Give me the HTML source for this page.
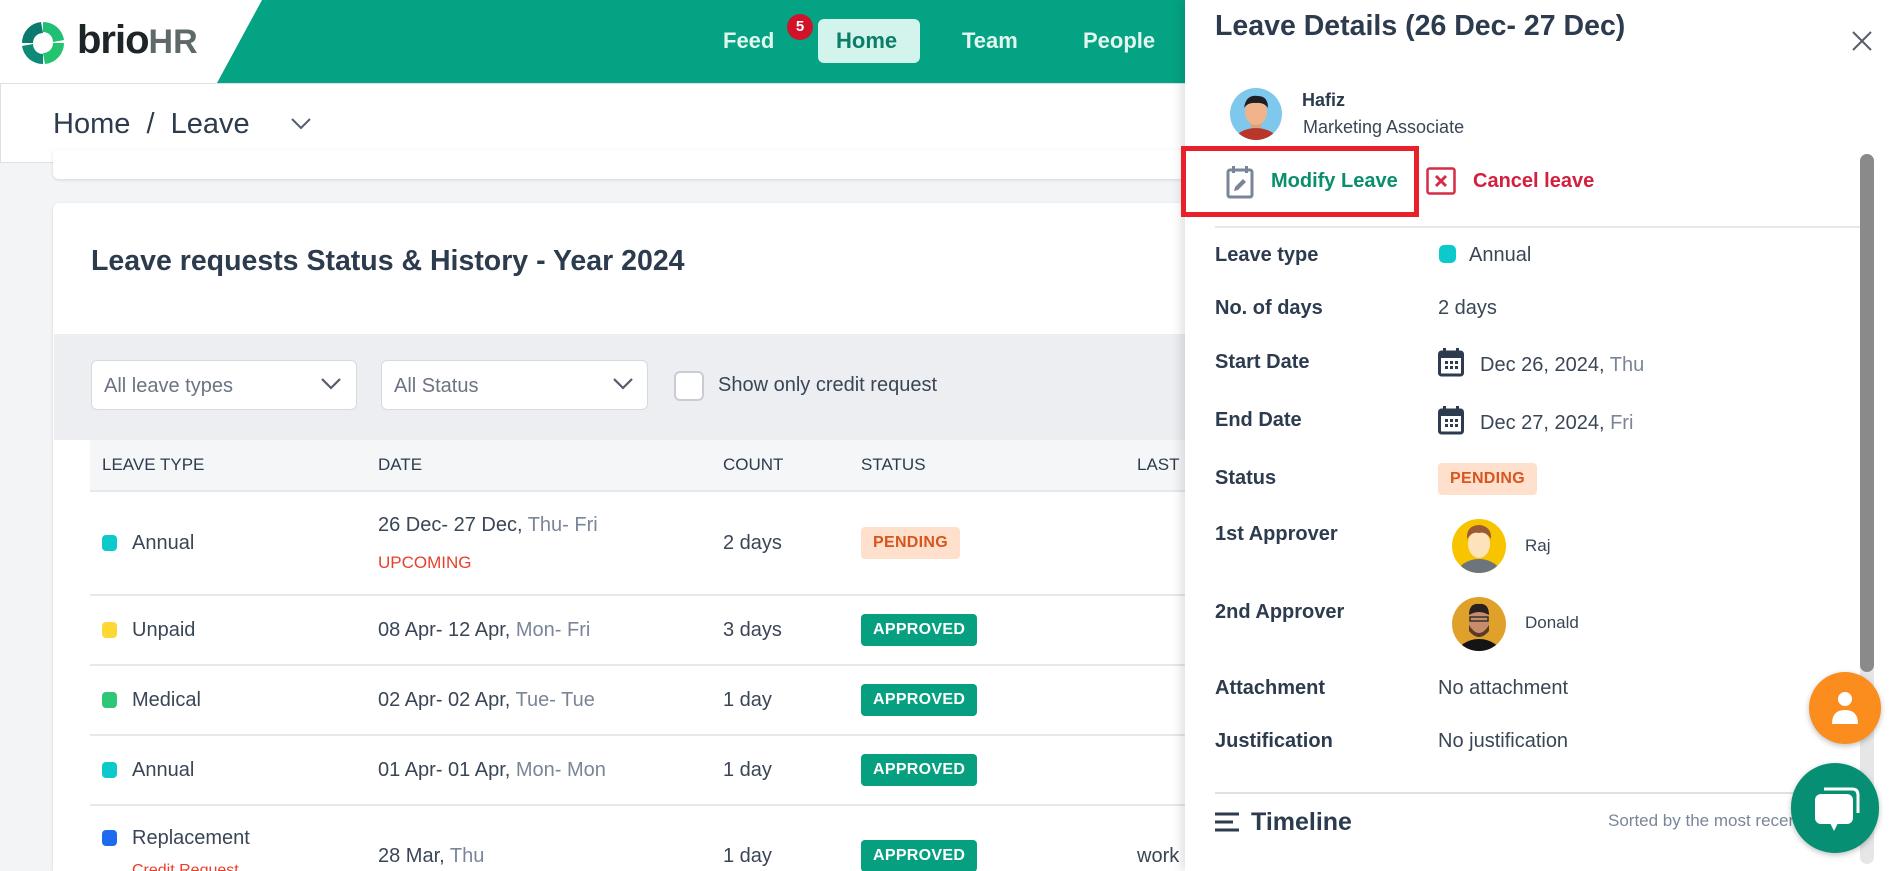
<!DOCTYPE html>
<html style="width:1896px;height:871px;overflow:hidden"><head><meta charset="utf-8"><style>
*{box-sizing:border-box;margin:0;padding:0}
body{width:1896px;height:871px;overflow:hidden;background:#F3F4F6;font-family:"Liberation Sans",sans-serif;color:#2D3B4E;position:relative}
.abs{position:absolute}
.hdr{left:0;top:0;width:1896px;height:83px;background:#04A383}
.logoarea{left:0;top:0;width:262px;height:83px;background:#fff;clip-path:polygon(0 0,262px 0,217px 83px,0 83px)}
.nav{top:28px;font-size:22px;color:#E2F5EF;font-weight:bold}
.crumb{left:0;top:83px;width:1200px;height:80px;background:#fff;border:1px solid #DDE0E4}
.card{background:#fff;border-radius:6px;box-shadow:0 1px 3px rgba(0,0,0,.12)}
.sel{background:#fff;border:1px solid #D6D9DE;border-radius:6px;height:50px;font-size:20px;color:#6B7482;padding:14px 12px}
.th{top:455px;font-size:17px;color:#2D3B4E}
.td{font-size:20px;color:#3A4656}
.muted{color:#7A8698}
.dot{width:15px;height:16px;border-radius:4px}
.bad{font-size:16px;font-weight:bold;padding:7px 12px;border-radius:4px;letter-spacing:.3px}
.ap{background:#06A081;color:#fff}
.pe{background:#FFE0CC;color:#D5561E}
.rowline{height:2px;background:#E6E8EB;left:90px;width:1100px}
.panel{left:1185px;top:0;width:711px;height:871px;background:#fff;box-shadow:-4px 0 10px rgba(0,0,0,.12)}
.lbl{left:1215px;font-size:20px;font-weight:bold;color:#2D3B4E}
.val{left:1438px;font-size:20px;color:#3A4656}
</style></head><body>
<div class="abs hdr"></div>
<div class="abs logoarea"></div>
<svg class="abs" style="left:18px;top:18px" width="50" height="50" viewBox="0 0 50 50">
<path d="M25 4 A21 21 0 0 1 46 22 L35 24 A10 10 0 0 0 25 14Z" fill="#1FBF74"/>
<path d="M46 25 A21 21 0 0 1 27 46 L25 35 A10 10 0 0 0 35 25Z" fill="#22C56E"/>
<path d="M25 46 A21 21 0 0 1 4 28 L15 26 A10 10 0 0 0 25 36Z" fill="#0E8A78"/>
<path d="M4 25 A21 21 0 0 1 23 4 L25 15 A10 10 0 0 0 15 25Z" fill="#0A7A6E"/>
</svg>
<div class="abs" style="left:77px;top:18px;font-size:40px;font-weight:bold;color:#1E2528;letter-spacing:-1px">brio<span style="color:#5E6A6A;font-size:34px;letter-spacing:0">HR</span></div>
<div class="abs nav" style="left:723px">Feed</div>
<div class="abs" style="left:787px;top:14px;width:26px;height:26px;border-radius:13px;background:#D0132B;color:#fff;font-size:15px;font-weight:bold;text-align:center;line-height:26px">5</div>
<div class="abs" style="left:818px;top:19px;width:102px;height:44px;border-radius:6px;background:#D3F4EC"></div>
<div class="abs nav" style="left:836px;color:#0A7E68">Home</div>
<div class="abs nav" style="left:962px">Team</div>
<div class="abs nav" style="left:1083px">People</div>

<div class="abs crumb"></div>
<div class="abs" style="left:53px;top:108px;font-size:29px;color:#2D3B4E">Home&nbsp; /&nbsp; Leave</div>
<svg class="abs" style="left:290px;top:117px" width="22" height="14"><path d="M2 2 L11 11 L20 2" stroke="#555E6C" stroke-width="2" fill="none"/></svg>
<div class="abs card" style="left:53px;top:150px;width:1150px;height:29px;border-radius:0 0 6px 6px"></div>

<div class="abs card" style="left:53px;top:203px;width:1150px;height:668px;border-radius:6px 6px 0 0"></div>
<div class="abs" style="left:91px;top:245px;font-size:28.5px;font-weight:bold;color:#2D3B4E">Leave requests Status &amp; History - Year 2024</div>
<div class="abs" style="left:54px;top:334px;width:1140px;height:106px;background:#ECEEF1"></div>
<div class="abs sel" style="left:91px;top:360px;width:266px">All leave types</div>
<svg class="abs" style="left:320px;top:377px" width="22" height="14"><path d="M2 2 L11 11 L20 2" stroke="#555E6C" stroke-width="2.2" fill="none"/></svg>
<div class="abs sel" style="left:381px;top:360px;width:267px">All Status</div>
<svg class="abs" style="left:612px;top:377px" width="22" height="14"><path d="M2 2 L11 11 L20 2" stroke="#555E6C" stroke-width="2.2" fill="none"/></svg>
<div class="abs" style="left:674px;top:371px;width:30px;height:30px;border:2px solid #C9CDD3;border-radius:6px;background:#fff"></div>
<div class="abs" style="left:718px;top:374px;font-size:20px;color:#3A4656">Show only credit request</div>

<div class="abs" style="left:90px;top:440px;width:1104px;height:52px;background:#F5F6F8;border-bottom:2px solid #E6E8EB"></div>
<div class="abs th" style="left:102px">LEAVE TYPE</div>
<div class="abs th" style="left:378px">DATE</div>
<div class="abs th" style="left:723px">COUNT</div>
<div class="abs th" style="left:861px">STATUS</div>
<div class="abs th" style="left:1137px">LAST</div>

<div class="abs dot" style="left:102px;top:535px;background:#0CCACB"></div>
<div class="abs td" style="left:132px;top:532px">Annual</div>
<div class="abs td" style="left:378px;top:514px">26 Dec- 27 Dec, <span class="muted">Thu- Fri</span></div>
<div class="abs" style="left:378px;top:553px;font-size:17px;color:#E8402A">UPCOMING</div>
<div class="abs td" style="left:723px;top:532px">2 days</div>
<div class="abs bad pe" style="left:861px;top:527px">PENDING</div>
<div class="abs rowline" style="top:594px"></div>

<div class="abs dot" style="left:102px;top:622px;background:#FDD835"></div>
<div class="abs td" style="left:132px;top:619px">Unpaid</div>
<div class="abs td" style="left:378px;top:619px">08 Apr- 12 Apr, <span class="muted">Mon- Fri</span></div>
<div class="abs td" style="left:723px;top:619px">3 days</div>
<div class="abs bad ap" style="left:861px;top:614px">APPROVED</div>
<div class="abs rowline" style="top:664px"></div>

<div class="abs dot" style="left:102px;top:692px;background:#2EC777"></div>
<div class="abs td" style="left:132px;top:689px">Medical</div>
<div class="abs td" style="left:378px;top:689px">02 Apr- 02 Apr, <span class="muted">Tue- Tue</span></div>
<div class="abs td" style="left:723px;top:689px">1 day</div>
<div class="abs bad ap" style="left:861px;top:684px">APPROVED</div>
<div class="abs rowline" style="top:734px"></div>

<div class="abs dot" style="left:102px;top:762px;background:#0CCACB"></div>
<div class="abs td" style="left:132px;top:759px">Annual</div>
<div class="abs td" style="left:378px;top:759px">01 Apr- 01 Apr, <span class="muted">Mon- Mon</span></div>
<div class="abs td" style="left:723px;top:759px">1 day</div>
<div class="abs bad ap" style="left:861px;top:754px">APPROVED</div>
<div class="abs rowline" style="top:804px"></div>

<div class="abs dot" style="left:102px;top:830px;background:#1E6BF0"></div>
<div class="abs td" style="left:132px;top:827px">Replacement</div>
<div class="abs" style="left:132px;top:862px;font-size:16px;color:#E8402A">Credit Request</div>
<div class="abs td" style="left:378px;top:845px">28 Mar, <span class="muted">Thu</span></div>
<div class="abs td" style="left:723px;top:845px">1 day</div>
<div class="abs bad ap" style="left:861px;top:840px">APPROVED</div>
<div class="abs td" style="left:1137px;top:845px">work</div>

<div class="abs panel"></div>
<div class="abs" style="left:1215px;top:10px;font-size:28.5px;font-weight:bold;color:#2D3B4E">Leave Details (26 Dec- 27 Dec)</div>
<svg class="abs" style="left:1851px;top:30px" width="22" height="22"><path d="M2 2L20 20M20 2L2 20" stroke="#555E6C" stroke-width="2"/></svg>
<svg class="abs" style="left:1230px;top:88px" width="52" height="52" viewBox="0 0 52 52"><circle cx="26" cy="26" r="26" fill="#7EC8EE"/><clipPath id="c1"><circle cx="26" cy="26" r="26"/></clipPath><g clip-path="url(#c1)"><ellipse cx="26" cy="54" rx="22" ry="14" fill="#B8372A"/><rect x="21" y="30" width="10" height="10" fill="#E0A07A"/><ellipse cx="26" cy="24" rx="11" ry="13" fill="#F0B38A"/><path d="M14 20 Q16 6 28 8 Q38 8 38 20 Q34 14 26 15 Q18 14 14 20Z" fill="#1E1E24"/></g></svg>
<div class="abs" style="left:1302px;top:90px;font-size:18px;font-weight:bold;color:#2D3B4E">Hafiz</div>
<div class="abs" style="left:1303px;top:117px;font-size:18px;color:#3A4656">Marketing Associate</div>

<div class="abs" style="left:1181px;top:146px;width:238px;height:71px;border:5px solid #E8202A"></div>
<svg class="abs" style="left:1226px;top:165px" width="28" height="34" viewBox="0 0 28 34"><rect x="2" y="5" width="24" height="27" rx="2" fill="none" stroke="#7A8698" stroke-width="3"/><rect x="6" y="1" width="3" height="7" fill="#7A8698"/><rect x="19" y="1" width="3" height="7" fill="#7A8698"/><path d="M8 26 L9 22 L17 14 L20 17 L12 25Z" fill="#7A8698"/></svg>
<div class="abs" style="left:1271px;top:170px;font-size:20px;font-weight:bold;color:#0A8E6E">Modify Leave</div>
<svg class="abs" style="left:1426px;top:167px" width="30" height="28"><rect x="1.5" y="1.5" width="27" height="25" rx="2" fill="none" stroke="#D52D46" stroke-width="2.5"/><path d="M10 9L20 19M20 9L10 19" stroke="#D52D46" stroke-width="3"/></svg>
<div class="abs" style="left:1473px;top:170px;font-size:20px;font-weight:bold;color:#D2203E">Cancel leave</div>
<div class="abs" style="left:1215px;top:226px;width:645px;height:2px;background:#E6E8EB"></div>

<div class="abs lbl" style="top:244px">Leave type</div>
<div class="abs" style="left:1439px;top:245px;width:17px;height:18px;border-radius:5px;background:#0CCACB"></div>
<div class="abs val" style="left:1469px;top:244px">Annual</div>
<div class="abs lbl" style="top:297px">No. of days</div>
<div class="abs val" style="top:297px">2 days</div>
<div class="abs lbl" style="top:351px">Start Date</div>
<svg class="abs" style="left:1438px;top:347px" width="26" height="30"><rect x="1.5" y="5" width="23" height="23" rx="2" fill="none" stroke="#2D3B4E" stroke-width="3"/><rect x="1" y="5" width="24" height="6" fill="#2D3B4E"/><rect x="5" y="1" width="3" height="6" fill="#2D3B4E"/><rect x="18" y="1" width="3" height="6" fill="#2D3B4E"/><g fill="#2D3B4E"><rect x="7" y="14" width="3" height="3"/><rect x="12" y="14" width="3" height="3"/><rect x="17" y="14" width="3" height="3"/><rect x="7" y="19" width="3" height="3"/><rect x="12" y="19" width="3" height="3"/><rect x="17" y="19" width="3" height="3"/></g></svg>
<div class="abs val" style="left:1480px;top:354px">Dec 26, 2024, <span class="muted">Thu</span></div>
<div class="abs lbl" style="top:409px">End Date</div>
<svg class="abs" style="left:1438px;top:405px" width="26" height="30"><rect x="1.5" y="5" width="23" height="23" rx="2" fill="none" stroke="#2D3B4E" stroke-width="3"/><rect x="1" y="5" width="24" height="6" fill="#2D3B4E"/><rect x="5" y="1" width="3" height="6" fill="#2D3B4E"/><rect x="18" y="1" width="3" height="6" fill="#2D3B4E"/><g fill="#2D3B4E"><rect x="7" y="14" width="3" height="3"/><rect x="12" y="14" width="3" height="3"/><rect x="17" y="14" width="3" height="3"/><rect x="7" y="19" width="3" height="3"/><rect x="12" y="19" width="3" height="3"/><rect x="17" y="19" width="3" height="3"/></g></svg>
<div class="abs val" style="left:1480px;top:412px">Dec 27, 2024, <span class="muted">Fri</span></div>
<div class="abs lbl" style="top:467px">Status</div>
<div class="abs bad pe" style="left:1438px;top:463px">PENDING</div>
<div class="abs lbl" style="top:523px">1st Approver</div>
<svg class="abs" style="left:1452px;top:519px" width="54" height="54" viewBox="0 0 54 54"><circle cx="27" cy="27" r="27" fill="#F8C400"/><clipPath id="c2"><circle cx="27" cy="27" r="27"/></clipPath><g clip-path="url(#c2)"><ellipse cx="27" cy="56" rx="22" ry="16" fill="#6D747C"/><ellipse cx="27" cy="25" rx="11" ry="14" fill="#FCE3BC"/><path d="M15 20 Q14 6 28 6 Q40 8 39 20 Q34 12 27 14 Q20 12 15 20Z" fill="#9A5A35"/></g></svg>
<div class="abs val" style="left:1525px;top:536px;font-size:17px">Raj</div>
<div class="abs lbl" style="top:601px">2nd Approver</div>
<svg class="abs" style="left:1452px;top:597px" width="54" height="54" viewBox="0 0 54 54"><circle cx="27" cy="27" r="27" fill="#E0A12A"/><clipPath id="c3"><circle cx="27" cy="27" r="27"/></clipPath><g clip-path="url(#c3)"><ellipse cx="27" cy="58" rx="22" ry="16" fill="#141414"/><ellipse cx="27" cy="25" rx="10" ry="14" fill="#C98C68"/><path d="M17 28 Q27 44 37 28 L37 34 Q27 46 17 34Z" fill="#5A3A28"/><path d="M17 18 Q17 6 27 7 Q37 6 37 18 Q27 12 17 18Z" fill="#2A2020"/><rect x="18" y="20" width="18" height="4" fill="none" stroke="#333" stroke-width="1.5"/></g></svg>
<div class="abs val" style="left:1525px;top:613px;font-size:17px">Donald</div>
<div class="abs lbl" style="top:677px">Attachment</div>
<div class="abs val" style="top:677px">No attachment</div>
<div class="abs lbl" style="top:730px">Justification</div>
<div class="abs val" style="top:730px">No justification</div>
<div class="abs" style="left:1215px;top:792px;width:645px;height:2px;background:#DDE2E7"></div>
<svg class="abs" style="left:1215px;top:812px" width="24" height="20"><path d="M0 2H24M0 10H18M0 18H24" stroke="#2D3B4E" stroke-width="3"/></svg>
<div class="abs" style="left:1251px;top:808px;font-size:25px;font-weight:bold;color:#2D3B4E">Timeline</div>
<div class="abs" style="left:1608px;top:811px;font-size:17px;color:#7A8698;white-space:nowrap">Sorted by the most recent</div>

<div class="abs" style="left:1860px;top:154px;width:14px;height:710px;border-radius:7px;background:#E6E6E6"></div>
<div class="abs" style="left:1860px;top:154px;width:14px;height:518px;border-radius:7px;background:#8A8A8A"></div>
<div class="abs" style="left:1809px;top:672px;width:72px;height:72px;border-radius:36px;background:#FB8C1E;box-shadow:0 2px 6px rgba(0,0,0,.25)"></div>
<svg class="abs" style="left:1830px;top:690px" width="30" height="36"><circle cx="15" cy="9" r="7" fill="#fff"/><path d="M2 34 Q2 20 15 20 Q28 20 28 34Z" fill="#fff"/></svg>
<div class="abs" style="left:1791px;top:763px;width:88px;height:90px;border-radius:45px;background:#078F73;box-shadow:0 2px 6px rgba(0,0,0,.25)"></div>
<svg class="abs" style="left:1812px;top:785px" width="48" height="50"><path d="M12 4 H40 Q46 4 46 10 V28" stroke="#fff" stroke-width="3" fill="none"/><rect x="3" y="9" width="38" height="30" rx="6" fill="#fff"/><path d="M18 38 L22 46 L26 38Z" fill="#fff"/></svg>
</body></html>
